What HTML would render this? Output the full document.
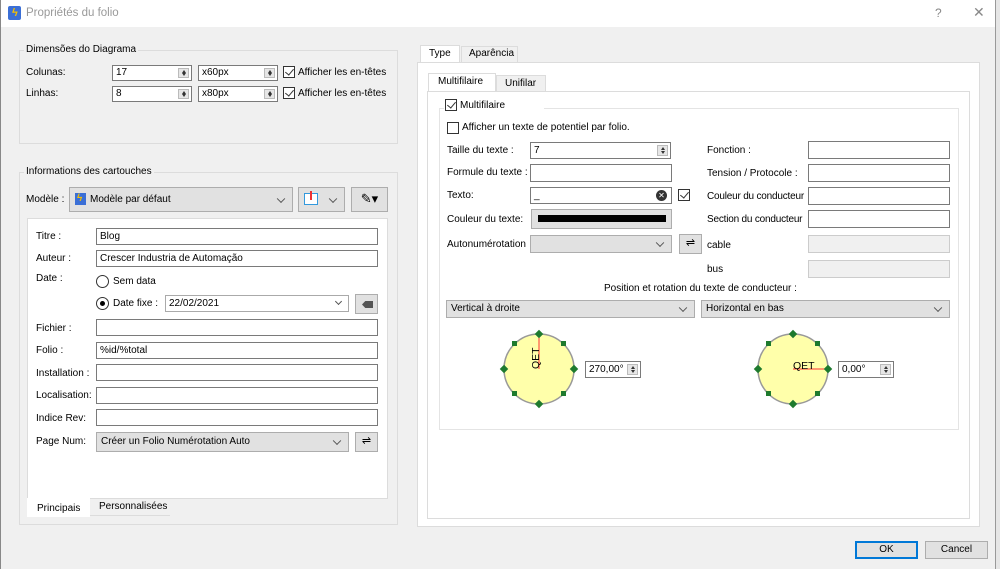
<!DOCTYPE html>
<html><head><meta charset="utf-8"><style>
*{box-sizing:border-box;margin:0;padding:0}
body{width:1000px;height:569px;background:#f0f0f0;font-family:"Liberation Sans",sans-serif;font-size:10px;color:#000;position:relative;overflow:hidden}
.a{position:absolute}
.t{position:absolute;white-space:nowrap;line-height:12px}
.in{position:absolute;background:#fff;border:1px solid #7a7a7a;padding-left:3px;padding-top:1px;line-height:14px;white-space:nowrap}
.dis{position:absolute;background:#f0f0f0;border:1px solid #ccc}
.cb{position:absolute;background:#e1e1e1;border:1px solid #adadad;padding-left:4px;white-space:nowrap}
.cb:after{content:"";position:absolute;right:8px;top:50%;width:5px;height:5px;border-right:1px solid #555;border-bottom:1px solid #555;transform:translateY(-70%) rotate(45deg)}
.sp{position:absolute;right:2px;top:2px;bottom:2px;width:11px;background:#e6e6e6;border:1px solid #bbb}
.sp:before{content:"";position:absolute;left:3px;top:1px;border:2.5px solid transparent;border-bottom:3px solid #333;border-top:0}
.sp:after{content:"";position:absolute;left:3px;bottom:1px;border:2.5px solid transparent;border-top:3px solid #333;border-bottom:0}
.chk{position:absolute;width:12px;height:12px;border:1px solid #333;background:#fff}
.chk.on:after{content:"";position:absolute;left:3px;top:0px;width:4px;height:7px;border-right:1.3px solid #333;border-bottom:1.3px solid #333;transform:rotate(40deg)}
.grp{position:absolute;border:1px solid #dcdcdc}
.btn{position:absolute;background:#e1e1e1;border:1px solid #adadad;text-align:center}
</style></head><body>
<div class="a" style="left:0;top:0;width:1000px;height:27px;background:#fff"></div>
<div class="a" style="left:0;top:0;width:1px;height:569px;background:#888"></div>
<div class="a" style="left:995px;top:0;width:5px;height:569px;background:#e6e6e6;border-left:1px solid #999"></div>
<div class="a" style="left:8px;top:6px;width:13px;height:14px;background:#3b6fd6;border-radius:2px"></div>
<div class="t" style="left:12px;top:7px;color:#f5c000;font-weight:bold;font-size:11px">ϟ</div>
<div class="t" style="left:26px;top:7px;color:#999;font-size:11.5px">Propriétés du folio</div>
<div class="t" style="left:935px;top:7px;color:#888;font-size:12px">?</div>
<div class="t" style="left:973px;top:6px;color:#888;font-size:14px;font-weight:lighter">✕</div>

<!-- Dimensions group -->
<div class="grp" style="left:19px;top:50px;width:379px;height:94px"></div>
<div class="t" style="left:24px;top:44px;background:#f0f0f0;padding:0 2px">Dimensões do Diagrama</div>
<div class="t" style="left:26px;top:67px">Colunas:</div>
<div class="in" style="left:112px;top:65px;width:80px;height:16px;line-height:12px">17<div class="sp"></div></div>
<div class="in" style="left:198px;top:65px;width:80px;height:16px;line-height:12px">x60px<div class="sp"></div></div>
<div class="chk on" style="left:283px;top:66px"></div><div class="t" style="left:298px;top:67px">Afficher les en-têtes</div>
<div class="t" style="left:26px;top:88px">Linhas:</div>
<div class="in" style="left:112px;top:86px;width:80px;height:16px;line-height:12px">8<div class="sp"></div></div>
<div class="in" style="left:198px;top:86px;width:80px;height:16px;line-height:12px">x80px<div class="sp"></div></div>
<div class="chk on" style="left:283px;top:87px"></div><div class="t" style="left:298px;top:88px">Afficher les en-têtes</div>

<!-- Informations group -->
<div class="grp" style="left:19px;top:172px;width:379px;height:353px"></div>
<div class="t" style="left:24px;top:166px;background:#f0f0f0;padding:0 2px">Informations des cartouches</div>
<div class="t" style="left:26px;top:194px">Modèle :</div>
<div class="cb" style="left:69px;top:187px;width:224px;height:25px;line-height:23px;padding-left:20px">Modèle par défaut</div>
<div class="a" style="left:75px;top:193px;width:11px;height:12px;background:#3b6fd6"></div>
<div class="t" style="left:77px;top:193px;color:#f5c000;font-weight:bold;font-size:10px">ϟ</div>
<div class="cb" style="left:298px;top:187px;width:47px;height:25px"></div>
<div class="a" style="left:304px;top:193px;width:14px;height:12px;border:1px solid #39d;background:#fff"></div>
<div class="a" style="left:310px;top:191px;width:2px;height:9px;background:#e33"></div>
<div class="btn" style="left:351px;top:187px;width:37px;height:25px;font-size:13px;line-height:22px">✎▾</div>

<div class="a" style="left:27px;top:218px;width:361px;height:281px;background:#fff;border:1px solid #dcdcdc"></div>
<div class="t" style="left:36px;top:231px">Titre :</div><div class="in" style="left:96px;top:228px;width:282px;height:17px">Blog</div>
<div class="t" style="left:36px;top:253px">Auteur :</div><div class="in" style="left:96px;top:250px;width:282px;height:17px">Crescer Industria de Automação</div>
<div class="t" style="left:36px;top:273px">Date :</div>
<div class="a" style="left:96px;top:275px;width:13px;height:13px;border:1px solid #333;border-radius:50%"></div><div class="t" style="left:113px;top:276px">Sem data</div>
<div class="a" style="left:96px;top:297px;width:13px;height:13px;border:1px solid #333;border-radius:50%"></div><div class="a" style="left:100px;top:301px;width:5px;height:5px;background:#000;border-radius:50%"></div>
<div class="t" style="left:113px;top:298px">Date fixe :</div>
<div class="in" style="left:165px;top:295px;width:184px;height:17px;border-color:#aaa">22/02/2021<div class="a" style="right:7px;top:3px;width:5px;height:5px;border-right:1px solid #555;border-bottom:1px solid #555;transform:rotate(45deg)"></div></div>
<div class="btn" style="left:355px;top:294px;width:23px;height:20px"><div class="a" style="left:6px;top:6px;width:11px;height:7px;background:#555;clip-path:polygon(30% 0,100% 0,100% 100%,30% 100%,0 50%)"></div></div>
<div class="t" style="left:36px;top:323px">Fichier :</div><div class="in" style="left:96px;top:319px;width:282px;height:17px"></div>
<div class="t" style="left:36px;top:345px">Folio :</div><div class="in" style="left:96px;top:342px;width:282px;height:17px">%id/%total</div>
<div class="t" style="left:36px;top:368px">Installation :</div><div class="in" style="left:96px;top:364px;width:282px;height:17px"></div>
<div class="t" style="left:36px;top:390px">Localisation:</div><div class="in" style="left:96px;top:387px;width:282px;height:17px"></div>
<div class="t" style="left:36px;top:413px">Indice Rev:</div><div class="in" style="left:96px;top:409px;width:282px;height:17px"></div>
<div class="t" style="left:36px;top:436px">Page Num:</div>
<div class="cb" style="left:96px;top:432px;width:253px;height:20px;line-height:18px">Créer un Folio Numérotation Auto</div>
<div class="btn" style="left:355px;top:432px;width:23px;height:20px;line-height:16px;font-size:11px">⇌</div>
<div class="a" style="left:27px;top:498px;width:63px;height:19px;background:#fff"></div>
<div class="t" style="left:37px;top:503px">Principais</div>
<div class="a" style="left:90px;top:499px;width:80px;height:17px;border-bottom:1px solid #dcdcdc"></div>
<div class="t" style="left:99px;top:501px">Personnalisées</div>

<!-- Right side -->
<div class="a" style="left:420px;top:45px;width:40px;height:18px;background:#fff;border:1px solid #dcdcdc;border-bottom:none"></div>
<div class="t" style="left:429px;top:48px">Type</div>
<div class="a" style="left:461px;top:46px;width:57px;height:16px;border:1px solid #dcdcdc;border-bottom:none"></div>
<div class="t" style="left:469px;top:48px">Aparência</div>
<div class="a" style="left:417px;top:62px;width:563px;height:465px;background:#fff;border:1px solid #dcdcdc"></div>
<div class="a" style="left:428px;top:73px;width:68px;height:19px;background:#fff;border:1px solid #dcdcdc;border-bottom:none"></div>
<div class="t" style="left:438px;top:76px">Multifilaire</div>
<div class="a" style="left:496px;top:75px;width:50px;height:17px;background:#f0f0f0;border:1px solid #dcdcdc"></div>
<div class="t" style="left:505px;top:78px">Unifilar</div>
<div class="a" style="left:427px;top:91px;width:543px;height:428px;border:1px solid #dcdcdc"></div>
<div class="grp" style="left:439px;top:108px;width:520px;height:322px;border-color:#e4e4e4"></div>
<div class="a" style="left:444px;top:97px;width:100px;height:16px;background:#fff"></div>
<div class="chk on" style="left:445px;top:99px"></div><div class="t" style="left:460px;top:100px">Multifilaire</div>
<div class="chk" style="left:447px;top:122px"></div><div class="t" style="left:462px;top:122px">Afficher un texte de potentiel par folio.</div>
<div class="t" style="left:447px;top:145px">Taille du texte :</div><div class="in" style="left:530px;top:142px;width:141px;height:17px">7<div class="sp"></div></div>
<div class="t" style="left:447px;top:167px">Formule du texte :</div><div class="in" style="left:530px;top:164px;width:142px;height:18px"></div>
<div class="t" style="left:447px;top:190px">Texto:</div><div class="in" style="left:530px;top:187px;width:142px;height:17px">_<div class="a" style="right:4px;top:2px;width:11px;height:11px;border-radius:50%;background:#333;color:#fff;font-size:8px;line-height:11px;text-align:center;padding:0">✕</div></div>
<div class="chk on" style="left:678px;top:189px"></div>
<div class="t" style="left:447px;top:214px">Couleur du texte:</div>
<div class="btn" style="left:531px;top:209px;width:141px;height:20px"><div class="a" style="left:6px;top:5px;width:128px;height:7px;background:#000"></div></div>
<div class="t" style="left:447px;top:239px">Autonumérotation</div>
<div class="cb" style="left:530px;top:235px;width:142px;height:18px"></div>
<div class="btn" style="left:679px;top:234px;width:23px;height:20px;line-height:16px;font-size:11px">⇌</div>
<div class="t" style="left:707px;top:145px">Fonction :</div><div class="in" style="left:808px;top:141px;width:142px;height:18px"></div>
<div class="t" style="left:707px;top:168px">Tension / Protocole :</div><div class="in" style="left:808px;top:164px;width:142px;height:18px"></div>
<div class="t" style="left:707px;top:191px;letter-spacing:-0.2px">Couleur du conducteur</div><div class="in" style="left:808px;top:187px;width:142px;height:18px"></div>
<div class="t" style="left:707px;top:214px;letter-spacing:-0.2px">Section du conducteur</div><div class="in" style="left:808px;top:210px;width:142px;height:18px"></div>
<div class="t" style="left:707px;top:240px">cable</div><div class="dis" style="left:808px;top:235px;width:142px;height:18px"></div>
<div class="t" style="left:707px;top:264px">bus</div><div class="dis" style="left:808px;top:260px;width:142px;height:18px"></div>
<div class="t" style="left:604px;top:283px">Position et rotation du texte de conducteur :</div>
<div class="cb" style="left:446px;top:300px;width:249px;height:18px;line-height:16px">Vertical à droite</div>
<div class="cb" style="left:701px;top:300px;width:249px;height:18px;line-height:16px">Horizontal en bas</div>

<svg class="a" style="left:495px;top:325px" width="90" height="90">
<circle cx="44" cy="44" r="35" fill="#ffffaa" stroke="#999" stroke-width="1.5"/>
<line x1="44" y1="44" x2="44" y2="9" stroke="#f33" stroke-width="1"/>
<g fill="#1e7a2e"><rect x="41" y="6" width="6" height="6" transform="rotate(45 44 9)"/><rect x="41" y="76" width="6" height="6" transform="rotate(45 44 79)"/><rect x="6" y="41" width="6" height="6" transform="rotate(45 9 44)"/><rect x="76" y="41" width="6" height="6" transform="rotate(45 79 44)"/><rect x="66" y="16" width="5" height="5"/><rect x="17" y="16" width="5" height="5"/><rect x="66" y="66" width="5" height="5"/><rect x="17" y="66" width="5" height="5"/></g>
<text x="0" y="0" transform="translate(44,44) rotate(-90)" font-family="Liberation Sans" font-size="10.5" text-anchor="start">QET</text>
</svg>
<div class="in" style="left:585px;top:361px;width:56px;height:17px">270,00°<div class="sp"></div></div>
<svg class="a" style="left:749px;top:325px" width="90" height="90">
<circle cx="44" cy="44" r="35" fill="#ffffaa" stroke="#999" stroke-width="1.5"/>
<line x1="44" y1="44" x2="79" y2="44" stroke="#f33" stroke-width="1"/>
<g fill="#1e7a2e"><rect x="41" y="6" width="6" height="6" transform="rotate(45 44 9)"/><rect x="41" y="76" width="6" height="6" transform="rotate(45 44 79)"/><rect x="6" y="41" width="6" height="6" transform="rotate(45 9 44)"/><rect x="76" y="41" width="6" height="6" transform="rotate(45 79 44)"/><rect x="66" y="16" width="5" height="5"/><rect x="17" y="16" width="5" height="5"/><rect x="66" y="66" width="5" height="5"/><rect x="17" y="66" width="5" height="5"/></g>
<text x="44" y="44" font-family="Liberation Sans" font-size="10.5">QET</text>
</svg>
<div class="in" style="left:838px;top:361px;width:56px;height:17px">0,00°<div class="sp"></div></div>

<div class="btn" style="left:855px;top:541px;width:63px;height:18px;border:2px solid #0078d7;line-height:14px">OK</div>
<div class="btn" style="left:925px;top:541px;width:63px;height:18px;line-height:16px">Cancel</div>
</body></html>
